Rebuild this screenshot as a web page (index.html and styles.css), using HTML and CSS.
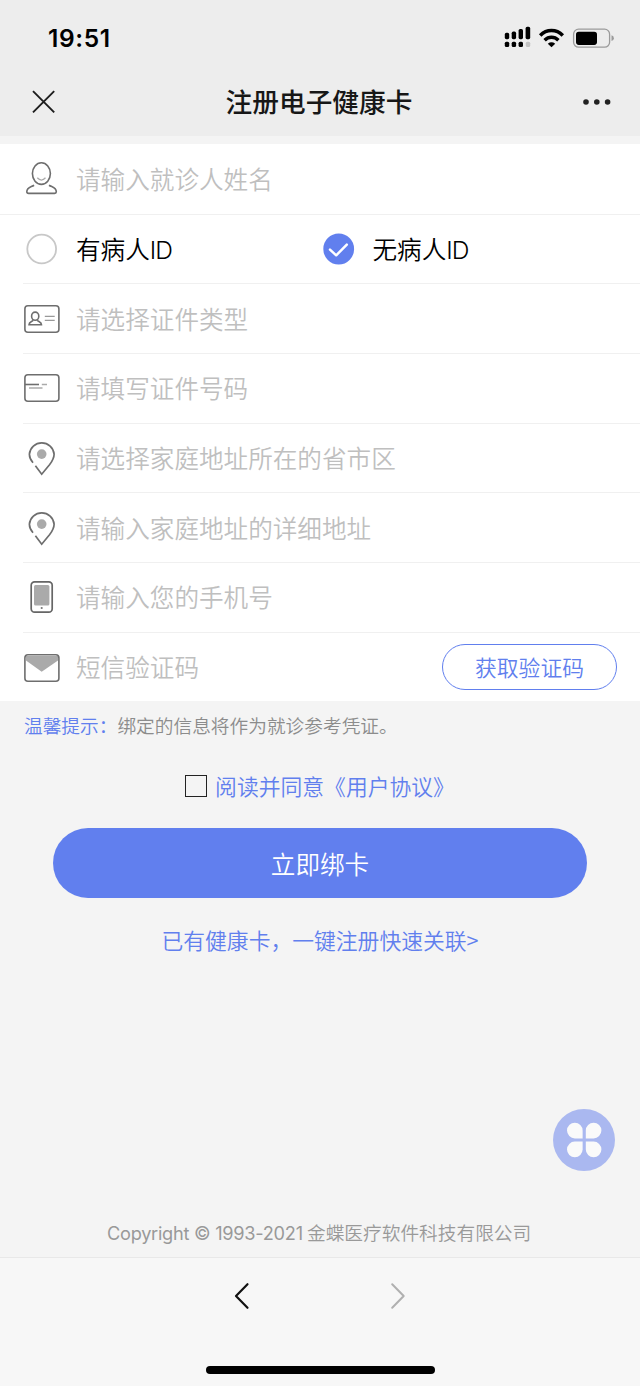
FILE: index.html
```html
<!DOCTYPE html>
<html lang="zh-CN">
<head>
<meta charset="utf-8">
<title>注册电子健康卡</title>
<link rel="stylesheet" href="styles.css">
</head>
<body>
<div class="screen">
  <header class="header">
    <div class="status-bar">
      <span class="time">19:51</span>
      <svg class="status-icons" width="112" height="24" viewBox="503 26 112 24">
        <g fill="#000">
          <rect x="504.8" y="32.8" width="4.4" height="6.4" rx="1.6"/>
          <rect x="511.7" y="31.6" width="4.4" height="7.6" rx="1.6"/>
          <rect x="518.6" y="29" width="4.4" height="10.2" rx="1.6"/>
          <rect x="525.6" y="26.8" width="4.6" height="12.4" rx="1.6"/>
          <rect x="504.8" y="41.8" width="4.4" height="5.2" rx="1.5"/>
          <rect x="511.7" y="41.8" width="4.4" height="5.2" rx="1.5"/>
          <rect x="518.6" y="41.8" width="4.4" height="5.2" rx="1.5"/>
          <rect x="525.8" y="41.8" width="4.4" height="5.2" rx="1.5" fill="#c2c2c2"/>
        </g>
        <g fill="none" stroke="#000" stroke-width="3.5">
          <path d="M540.2 35.4C546.7 28.9 556.3 28.9 562.8 35.4"/>
          <path d="M544.6 40.2C548.7 36.3 554.3 36.3 558.4 40.2"/>
        </g>
        <path d="M547.8 43.7C550.1 41.8 552.9 41.8 555.2 43.7L551.5 47.2Z"/>
        <rect x="573.6" y="29.2" width="36" height="18" rx="5" fill="none" stroke="#9b9b9b" stroke-width="1.3"/>
        <rect x="576" y="31.7" width="21" height="13.2" rx="2.8"/>
        <path d="M611.5 35.3Q613.9 36 613.9 38.2T611.5 41.1Z" fill="#9b9b9b"/>
      </svg>
    </div>
    <div class="nav-bar">
      <svg width="28" height="28" viewBox="30 88 28 28"><path d="M33 91.2L54.2 112.4M54.2 91.2L33 112.4" stroke="#1d1d1d" stroke-width="1.9"/></svg>
      <h1 class="title">注册电子健康卡</h1>
      <svg width="30" height="10" viewBox="582 97 30 10" fill="#222"><circle cx="586" cy="102" r="2.8"/><circle cx="596.8" cy="102" r="2.8"/><circle cx="607.6" cy="102" r="2.8"/></svg>
    </div>
  </header>

  <main class="form">
    <div class="row row-full">
      <svg class="icon" viewBox="0 0 36 36" fill="none" stroke="#6e6e6e" stroke-width="1.6">
        <ellipse cx="17.4" cy="12.6" rx="9" ry="10.8"/>
        <path d="M13.3 16.8Q17.4 21.3 21.5 16.8" stroke="#aaa" stroke-width="1.3"/>
        <path d="M10.1 24.2C6.8 26.2 2.8 26 2.8 30.8Q2.8 32.4 4.6 32.4H30.6Q32.3 32.4 32.3 30.8C32.3 26 28.3 26.2 25 24.2"/>
      </svg>
      <span class="placeholder">请输入就诊人姓名</span>
    </div>
    <div class="row row-full choices">
      <label class="choice">
        <svg class="icon" viewBox="0 0 36 36"><circle cx="17.7" cy="18" r="14.4" fill="#fff" stroke="#c8c8c8" stroke-width="1.8"/></svg>
        <span class="choice-text">有病人<span class="latin">ID</span></span>
      </label>
      <label class="choice">
        <svg class="icon" viewBox="0 0 36 36"><circle cx="17.7" cy="18" r="15.4" fill="#617fee"/><path d="M9 18.6L15.2 24.3L25.8 13.6" fill="none" stroke="#fff" stroke-width="2.5" stroke-linecap="round" stroke-linejoin="round"/></svg>
        <span class="choice-text">无病人<span class="latin">ID</span></span>
      </label>
    </div>
    <div class="row">
      <svg class="icon" viewBox="0 0 36 36" fill="none" stroke="#6e6e6e" stroke-width="1.6">
        <rect x=".9" y="4.7" width="34" height="26.6" rx="3"/>
        <ellipse cx="11.2" cy="15.2" rx="3.6" ry="4.1"/>
        <path d="M9.2 19.3C7.8 20.8 5 20.7 5 23.8H17.5C17.5 20.7 14.6 20.8 13.2 19.3"/>
        <path d="M20.8 15.3H30.7M20.8 19.4H30.7" stroke="#999" stroke-width="1.3"/>
      </svg>
      <span class="placeholder">请选择证件类型</span>
    </div>
    <div class="row">
      <svg class="icon" viewBox="0 0 36 36" fill="none" stroke="#6e6e6e" stroke-width="1.6">
        <rect x=".9" y="4.7" width="34" height="26.6" rx="3"/>
        <path d="M1 14.5H15"/>
        <path d="M17.8 14.5H23M5 18H18.5" stroke="#aaa" stroke-width="1.5"/>
      </svg>
      <span class="placeholder">请填写证件号码</span>
    </div>
    <div class="row">
      <svg class="icon" viewBox="0 0 36 36" fill="none" stroke="#6e6e6e" stroke-width="1.7">
        <path d="M9 22.8C6.9 20.3 5.4 17.4 5.4 14.2A12.4 12.4 0 0 1 30.1 14.2C30.1 18.5 28 21.5 25.5 24.8L17.7 34.2L11.4 25.8"/>
        <circle cx="17.7" cy="14.1" r="4.8" fill="#aaa" stroke="none"/>
      </svg>
      <span class="placeholder">请选择家庭地址所在的省市区</span>
    </div>
    <div class="row">
      <svg class="icon" viewBox="0 0 36 36" fill="none" stroke="#6e6e6e" stroke-width="1.7">
        <path d="M9 22.8C6.9 20.3 5.4 17.4 5.4 14.2A12.4 12.4 0 0 1 30.1 14.2C30.1 18.5 28 21.5 25.5 24.8L17.7 34.2L11.4 25.8"/>
        <circle cx="17.7" cy="14.1" r="4.8" fill="#aaa" stroke="none"/>
      </svg>
      <span class="placeholder">请输入家庭地址的详细地址</span>
    </div>
    <div class="row">
      <svg class="icon" viewBox="0 0 36 36" fill="none" stroke="#666" stroke-width="1.7">
        <rect x="7.2" y="2.9" width="21" height="30.2" rx="3.4"/>
        <rect x="10" y="6" width="15.4" height="20.4" rx="1.5" fill="#aaa" stroke="none"/>
        <circle cx="17.7" cy="29" r="1.1" fill="#777" stroke="none"/>
      </svg>
      <span class="placeholder">请输入您的手机号</span>
    </div>
    <div class="row">
      <svg class="icon icon-mail" viewBox="0 0 36 36">
        <path d="M2 6H34V10.6L17.7 21.7L2 10.6Z" fill="#aaa"/>
        <rect x=".9" y="4.7" width="34" height="26.6" rx="3" fill="none" stroke="#6e6e6e" stroke-width="1.6"/>
      </svg>
      <span class="placeholder">短信验证码</span>
      <button class="code-button">获取验证码</button>
    </div>
  </main>

  <p class="tip"><span class="tip-label">温馨提示：</span>绑定的信息将作为就诊参考凭证。</p>
  <label class="agreement"><span class="checkbox"></span>阅读并同意《用户协议》</label>
  <button class="submit">立即绑卡</button>
  <a class="link">已有健康卡，一键注册快速关联&gt;</a>

  <p class="copyright"><span class="copyright-latin">Copyright © 1993-2021</span> 金蝶医疗软件科技有限公司</p>

  <footer class="toolbar">
    <div class="history">
      <svg width="20" height="30" viewBox="0 0 20 30"><path d="M15.5 3.2L4 15L15.5 26.8" fill="none" stroke="#111" stroke-width="2.2" stroke-linecap="round" stroke-linejoin="round"/></svg>
      <svg width="20" height="30" viewBox="0 0 20 30"><path d="M4.2 3.2L15.7 15L4.2 26.8" fill="none" stroke="#b0b0b0" stroke-width="2" stroke-linecap="round" stroke-linejoin="round"/></svg>
    </div>
    <div class="home-indicator"></div>
  </footer>

  <svg class="float-menu" viewBox="0 0 62 62">
    <circle cx="31" cy="31" r="31" fill="#aab8f0"/>
    <g fill="#fafafa">
      <path d="M29.6 29.4H21.8A7.8 7.8 0 1 1 29.6 21.6Z"/>
      <path d="M32.8 29.4H40.6A7.8 7.8 0 1 0 32.8 21.6Z"/>
      <path d="M29.6 32.6H21.8A7.8 7.8 0 1 0 29.6 40.4Z"/>
      <path d="M32.8 32.6H40.6A7.8 7.8 0 1 1 32.8 40.4Z"/>
    </g>
  </svg>
</div>
</body>
</html>
```
FILE: styles.css
```css
* { box-sizing: border-box; }

body {
  margin: 0;
  font-family: "Noto Sans CJK SC", sans-serif;
  font-weight: 350;
}

h1, p { margin: 0; }

button {
  padding: 0;
  font-family: inherit;
  font-weight: inherit;
}

.screen {
  position: relative;
  display: flex;
  flex-direction: column;
  width: 640px;
  height: 1386px;
  overflow: hidden;
  background: #f4f4f4;
}

.header {
  height: 136px;
  background: #ededed;
}

.status-bar {
  display: flex;
  justify-content: space-between;
  align-items: center;
  height: 76px;
  padding: 0 25px 0 48px;
}

.time {
  font: 600 24.5px/30px Inter, sans-serif;
  letter-spacing: .6px;
}

.nav-bar {
  display: flex;
  justify-content: space-between;
  align-items: center;
  height: 52px;
  padding: 0 28px 0 30px;
}

.title {
  margin: -2px 2px 0 0;
  color: #171717;
  font-size: 26.7px;
  font-weight: 500;
  line-height: 40px;
}

.form {
  margin-top: 8px;
  padding-left: 23px;
  background: #fff;
}

.row {
  display: flex;
  align-items: center;
  height: 69.66px;
  padding: 0 23px 0 1px;
  border-top: 1.5px solid #f0f0f0;
}

.row:first-child { border-top-color: #fff; }

.row-full {
  margin-left: -23px;
  padding-left: 24px;
}

.icon {
  flex: none;
  width: 36px;
  height: 36px;
  margin-right: 16px;
}

.icon-mail { margin-top: 3px; }

.placeholder {
  flex: 1;
  margin-top: -2px;
  color: #bfbfbf;
  font-size: 24.6px;
  line-height: 36px;
}

.choice {
  display: flex;
  align-items: center;
  width: 297px;
}

.choice-text {
  color: #000;
  font-size: 24.6px;
  line-height: 36px;
}

.latin {
  font-family: Inter, sans-serif;
  letter-spacing: -1px;
}

.code-button {
  width: 175px;
  height: 46px;
  border: 1.5px solid #617fee;
  border-radius: 23px;
  background: #fff;
  color: #617fee;
  font-size: 21.8px;
}

.tip {
  margin: 10px 0 0 24px;
  color: #8c8c8c;
  font-size: 18.7px;
  line-height: 28px;
}

.tip-label { color: #617fee; }

.agreement {
  display: flex;
  align-items: center;
  align-self: center;
  gap: 8px;
  margin-top: 31px;
  color: #617fee;
  font-size: 21.8px;
  line-height: 32px;
}

.checkbox {
  width: 22px;
  height: 22px;
  border: 1px solid #222;
}

.submit {
  align-self: center;
  width: 534px;
  height: 70px;
  margin-top: 26px;
  border: 0;
  border-radius: 35px;
  background: #617fee;
  color: #fff;
  font-size: 24.6px;
}

.link {
  align-self: center;
  margin-top: 26px;
  color: #617fee;
  font-size: 21.8px;
  line-height: 32px;
}

.copyright {
  margin-top: auto;
  padding: 0 0 10px 107px;
  color: #999;
  font-size: 18.7px;
  line-height: 28px;
  white-space: nowrap;
}

.copyright-latin {
  font-family: Inter, sans-serif;
  font-size: 18.2px;
  font-weight: 400;
  letter-spacing: -.27px;
}

.toolbar {
  display: flex;
  flex-direction: column;
  justify-content: space-between;
  align-items: center;
  height: 129px;
  padding: 23px 0 12px;
  border-top: 1.5px solid #e8e8e8;
  background: #f7f7f7;
}

.history {
  display: flex;
  gap: 136px;
}

.home-indicator {
  width: 229px;
  height: 8px;
  border-radius: 4px;
  background: #000;
}

.float-menu {
  position: absolute;
  top: 1109px;
  left: 553px;
  width: 62px;
  height: 62px;
}
```
